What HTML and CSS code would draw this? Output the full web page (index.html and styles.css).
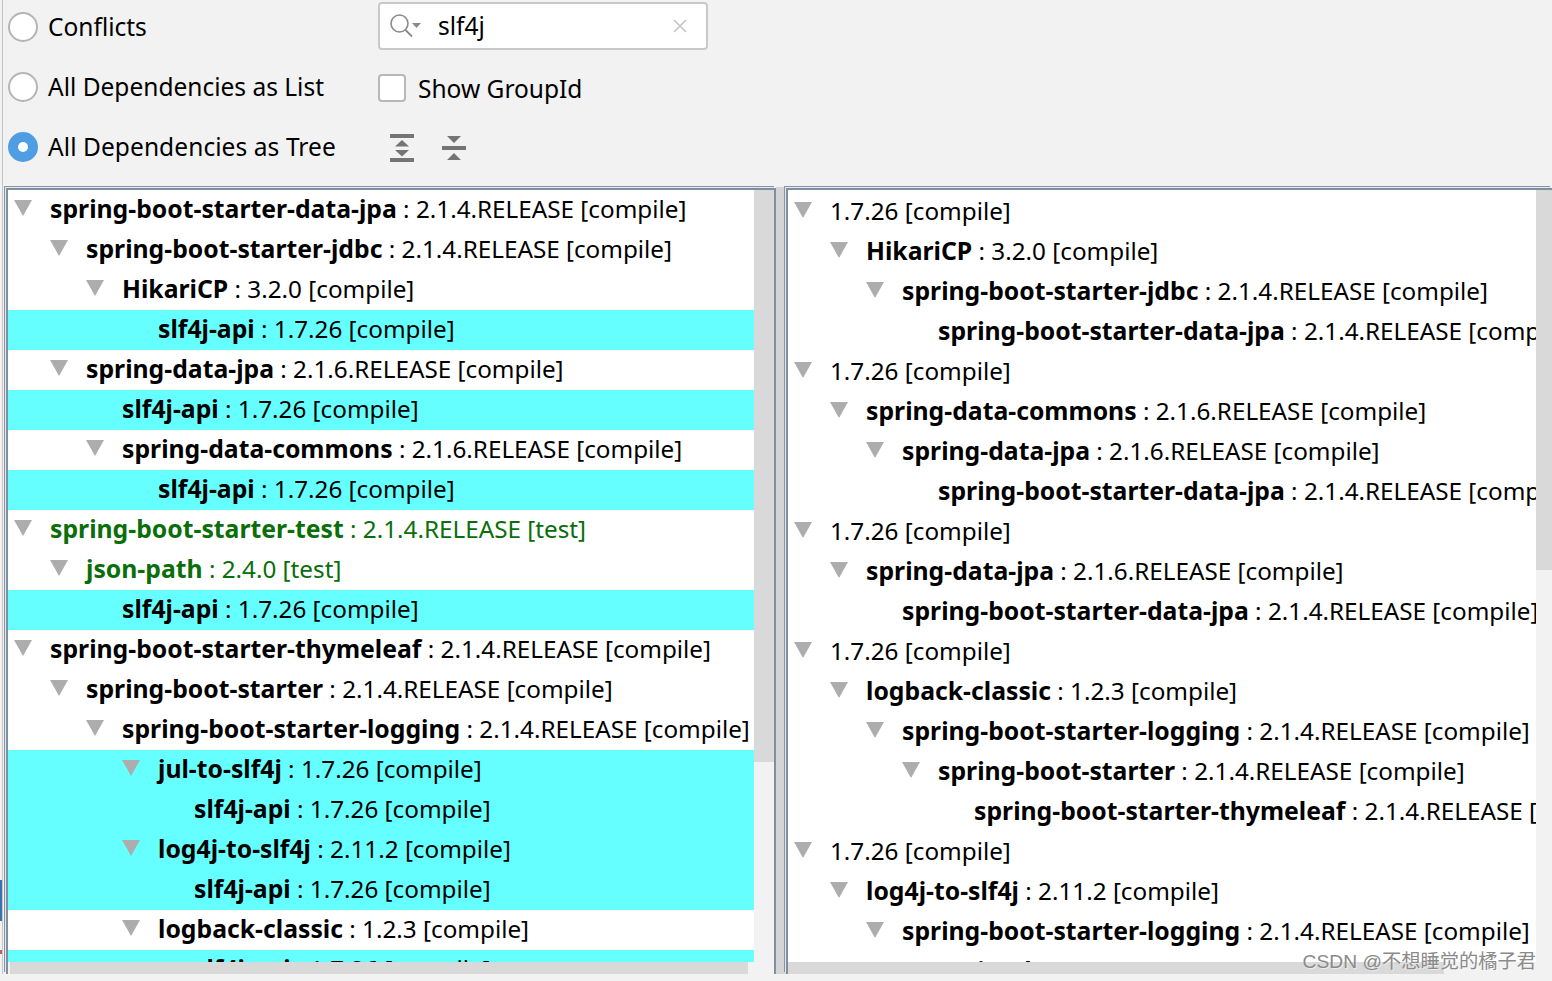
FILE: index.html
```html
<!DOCTYPE html>
<html lang="en">
<head>
<meta charset="utf-8">
<title>Dependency Analyzer</title>
<link rel="stylesheet" href="styles.css">
</head>
<body>
<div class="window">
  <div class="edge"><div class="edge-blue"></div><div class="edge-red"></div></div>
  <div class="toolbar">
    <div class="options">
      <label class="option"><span class="radio"></span><span class="label">Conflicts</span></label>
      <label class="option"><span class="radio"></span><span class="label">All Dependencies as List</span></label>
      <label class="option"><span class="radio checked"></span><span class="label wide">All Dependencies as Tree</span></label>
    </div>
    <div class="controls">
      <div class="search">
        <svg class="search-icon" width="34" height="26" viewBox="0 0 34 26"><circle cx="9.5" cy="10.5" r="8.5" fill="none" stroke="#8a8a8a" stroke-width="1.6"/><path d="M15.5 17l6.5 6.5" stroke="#8a8a8a" stroke-width="1.8"/><path d="M22 10h9l-4.5 5z" fill="#8a8a8a"/></svg>
        <span class="search-text">slf4j</span>
        <svg class="search-clear" width="16" height="16" viewBox="0 0 16 16"><path d="M2 2l12 12M14 2L2 14" stroke="#c4c4c4" stroke-width="1.6"/></svg>
      </div>
      <label class="check"><span class="box"></span>Show GroupId</label>
      <div class="icons">
        <svg width="24" height="28" viewBox="0 0 24 28"><path d="M0 0h24v4H0zM0 24h24v4H0zM12 6l7 6.5H5zM5 16h14l-7 6.5z" fill="#747474"/></svg>
        <svg width="24" height="28" viewBox="0 0 24 28"><path d="M0 12h24v4H0zM5 2h14l-7 7zM12 19l7 7H5z" fill="#747474"/></svg>
      </div>
    </div>
  </div>
  <div class="panes">
    <div class="pane left">
      <div class="tree">
        <div class="row l0 open"><b>spring-boot-starter-data-jpa</b> : 2.1.4.RELEASE [compile]</div>
        <div class="row l1 open"><b>spring-boot-starter-jdbc</b> : 2.1.4.RELEASE [compile]</div>
        <div class="row l2 open"><b>HikariCP</b> : 3.2.0 [compile]</div>
        <div class="row l3 hit"><b>slf4j-api</b> : 1.7.26 [compile]</div>
        <div class="row l1 open"><b>spring-data-jpa</b> : 2.1.6.RELEASE [compile]</div>
        <div class="row l2 hit"><b>slf4j-api</b> : 1.7.26 [compile]</div>
        <div class="row l2 open"><b>spring-data-commons</b> : 2.1.6.RELEASE [compile]</div>
        <div class="row l3 hit"><b>slf4j-api</b> : 1.7.26 [compile]</div>
        <div class="row l0 open test"><b>spring-boot-starter-test</b> : 2.1.4.RELEASE [test]</div>
        <div class="row l1 open test"><b>json-path</b> : 2.4.0 [test]</div>
        <div class="row l2 hit"><b>slf4j-api</b> : 1.7.26 [compile]</div>
        <div class="row l0 open"><b>spring-boot-starter-thymeleaf</b> : 2.1.4.RELEASE [compile]</div>
        <div class="row l1 open"><b>spring-boot-starter</b> : 2.1.4.RELEASE [compile]</div>
        <div class="row l2 open"><b>spring-boot-starter-logging</b> : 2.1.4.RELEASE [compile]</div>
        <div class="row l3 open hit"><b>jul-to-slf4j</b> : 1.7.26 [compile]</div>
        <div class="row l4 hit"><b>slf4j-api</b> : 1.7.26 [compile]</div>
        <div class="row l3 open hit"><b>log4j-to-slf4j</b> : 2.11.2 [compile]</div>
        <div class="row l4 hit"><b>slf4j-api</b> : 1.7.26 [compile]</div>
        <div class="row l3 open"><b>logback-classic</b> : 1.2.3 [compile]</div>
        <div class="row l4 hit"><b>slf4j-api</b> : 1.7.26 [compile]</div>
      </div>
      <div class="vbar"><div class="thumb thumb-left"></div></div>
      <div class="hbar"></div>
    </div>
    <div class="divider"></div>
    <div class="pane right">
      <div class="tree">
        <div class="row l0 open">1.7.26 [compile]</div>
        <div class="row l1 open"><b>HikariCP</b> : 3.2.0 [compile]</div>
        <div class="row l2 open"><b>spring-boot-starter-jdbc</b> : 2.1.4.RELEASE [compile]</div>
        <div class="row l3"><b>spring-boot-starter-data-jpa</b> : 2.1.4.RELEASE [compile]</div>
        <div class="row l0 open">1.7.26 [compile]</div>
        <div class="row l1 open"><b>spring-data-commons</b> : 2.1.6.RELEASE [compile]</div>
        <div class="row l2 open"><b>spring-data-jpa</b> : 2.1.6.RELEASE [compile]</div>
        <div class="row l3"><b>spring-boot-starter-data-jpa</b> : 2.1.4.RELEASE [compile]</div>
        <div class="row l0 open">1.7.26 [compile]</div>
        <div class="row l1 open"><b>spring-data-jpa</b> : 2.1.6.RELEASE [compile]</div>
        <div class="row l2"><b>spring-boot-starter-data-jpa</b> : 2.1.4.RELEASE [compile]</div>
        <div class="row l0 open">1.7.26 [compile]</div>
        <div class="row l1 open"><b>logback-classic</b> : 1.2.3 [compile]</div>
        <div class="row l2 open"><b>spring-boot-starter-logging</b> : 2.1.4.RELEASE [compile]</div>
        <div class="row l3 open"><b>spring-boot-starter</b> : 2.1.4.RELEASE [compile]</div>
        <div class="row l4"><b>spring-boot-starter-thymeleaf</b> : 2.1.4.RELEASE [compile]</div>
        <div class="row l0 open">1.7.26 [compile]</div>
        <div class="row l1 open"><b>log4j-to-slf4j</b> : 2.11.2 [compile]</div>
        <div class="row l2 open"><b>spring-boot-starter-logging</b> : 2.1.4.RELEASE [compile]</div>
        <div class="row l3"><b>spring-boot-starter</b> : 2.1.4.RELEASE [compile]</div>
      </div>
      <div class="vbar"><div class="thumb thumb-right"></div></div>
      <div class="hbar"></div>
    </div>
  </div>
  <div class="watermark">CSDN @不想睡觉的橘子君</div>
</div>
</body>
</html>
```
FILE: styles.css
```css
* { box-sizing: border-box; }
html, body { margin: 0; height: 100%; overflow: hidden; }
body { background: #f2f2f2; font-family: "Noto Sans", "Noto Sans CJK SC", sans-serif; font-size: 24.5px; color: #000; }
.window { position: relative; height: 981px; display: flex; flex-direction: column; }
.edge { position: absolute; left: 0; top: 0; width: 3px; height: 974px; background: linear-gradient(to right, #f2f2f2 2px, #c4c4c4 2px); }
.edge-blue { position: absolute; left: 0; top: 880px; width: 2px; height: 41px; background: #3a74b0; }
.edge-red { position: absolute; left: 0; top: 950px; width: 2px; height: 4px; background: #c0605a; }
.toolbar { height: 188px; display: flex; padding-left: 8px; }
.options { width: 370px; display: flex; flex-direction: column; margin-top: -3px; }
.option { height: 60px; display: flex; align-items: center; gap: 10px; }
.label { margin-bottom: 2px; }
.label.wide { letter-spacing: 0.08px; }
.radio { width: 30px; height: 30px; border-radius: 50%; background: #fff; border: 2px solid #b5b5b5; flex: none; }
.radio.checked { background: #4f9ee3; border-color: #4f9ee3; position: relative; }
.radio.checked::after { content: ""; position: absolute; left: 8px; top: 8px; width: 10px; height: 10px; border-radius: 50%; background: #fff; }
.controls { display: flex; flex-direction: column; padding-top: 2px; }
.search { width: 330px; height: 48px; background: #fff; border: 2px solid #c9c9c9; border-radius: 4px; display: flex; align-items: center; padding: 0 18px 0 10px; }
.search-text { margin-left: 14px; margin-bottom: 2px; flex: 1; }
.check { height: 28px; margin-top: 24px; display: flex; align-items: center; gap: 12px; }
.box { width: 28px; height: 28px; background: #fff; border: 2px solid #b8b8b8; border-radius: 4px; }
.icons { display: flex; gap: 28px; margin-top: 32px; padding-left: 12px; }
.panes { display: flex; height: 786px; padding-left: 6px; }
.pane { position: relative; height: 786px; border-left: 2px solid #7f8f9f; border-top: 2px solid #7f8f9f; box-shadow: -1px -1px 0 #e4e8ec, -2px -2px 0 #8595a5; background: #f2f2f2; overflow: hidden; }
.pane.left { width: 770px; border-right: 2px solid #7f8f9f; }
.divider { width: 10px; margin-top: -1px; background: #d4d4d4; height: 787px; }
.pane.right { flex: 1; }
.tree { height: 772px; overflow: hidden; background: #fff; }
.left .tree { width: 746px; }
.right .tree { width: 748px; padding-top: 2px; }
.row { height: 40px; line-height: 38px; white-space: nowrap; position: relative; font-size: 24.25px; }
.row b { font-weight: 700; font-size: 24.75px; }
.hit { background: #66ffff; }
.test { color: #0a6e0a; }
.l0 { padding-left: 42px; }
.l1 { padding-left: 78px; }
.l2 { padding-left: 114px; }
.l3 { padding-left: 150px; }
.l4 { padding-left: 186px; }
.open::before { content: ""; position: absolute; top: 10px; width: 0; height: 0; border-left: 9px solid transparent; border-right: 9px solid transparent; border-top: 16px solid #adadad; }
.l0.open::before { left: 6px; }
.l1.open::before { left: 42px; }
.l2.open::before { left: 78px; }
.l3.open::before { left: 114px; }
.vbar { position: absolute; top: 0; height: 772px; background: #f2f2f2; }
.left .vbar { left: 746px; width: 20px; }
.right .vbar { left: 748px; width: 16px; }
.thumb { background: #d9d9d9; }
.thumb-left { height: 572px; }
.thumb-right { height: 380px; }
.hbar { position: absolute; top: 772px; height: 12px; background: #d9d9d9; }
.left .hbar { left: 2px; width: 738px; }
.right .hbar { left: 0; width: 656px; }
.watermark { position: absolute; right: 16px; bottom: 7px; font-family: "Liberation Sans", "Noto Sans CJK SC", sans-serif; font-size: 19.25px; line-height: 24px; color: #8a8a8a; text-shadow: 1px 1px 0 rgba(255,255,255,.5); }
```
